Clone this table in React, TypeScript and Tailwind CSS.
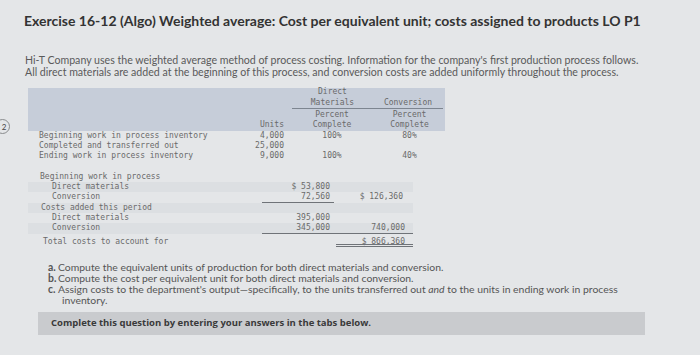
import React from "react";

const mono = { fontFamily: '"DejaVu Sans Mono", "Liberation Mono", monospace' };

export default function App() {
  return (
    <div
      className="relative w-[700px] h-[355px] overflow-hidden bg-[#e4e6e8] text-[#555]"
      style={{ fontFamily: 'Lato, "Open Sans", sans-serif' }}
    >
      <div className="absolute left-[-5px] top-[119px] w-[15px] h-[15px] rounded-full border border-[#8a8c8e] flex items-center justify-center text-[8px] text-[#444] pl-[3px]">
        2
      </div>

      <div className="pt-[13px] pl-[24px] text-[14px] leading-[16px] font-bold text-[#333]">
        Exercise 16-12 (Algo) Weighted average: Cost per equivalent unit; costs assigned to products LO P1
      </div>

      <div className="mt-[25px] pl-[25px] text-[10.6px] leading-[12px] text-[#5a5a5a]">
        <div>Hi-T Company uses the weighted average method of process costing. Information for the company's first production process follows.</div>
        <div>All direct materials are added at the beginning of this process, and conversion costs are added uniformly throughout the process.</div>
      </div>

      {/* Table 1 */}
      <div className="mt-[10px] ml-[28px] w-[417px] text-[8px] text-[#6a6a6a]" style={mono}>
        <div className="flex h-[43px] bg-[#c6cdd9]">
          <div className="w-[212px]" />
          <div className="w-[50px] flex items-end justify-end pr-[6px] pb-[1px] leading-[10px]">Units</div>
          <div className="w-[155px] flex flex-col">
            <div className="flex h-[21px] border-b border-[#7d8590] mx-[2px] leading-[10.5px]">
              <div className="w-[82px] flex flex-col items-center justify-end">
                <div>Direct</div>
                <div>Materials</div>
              </div>
              <div className="w-[71px] flex flex-col items-center justify-end">
                <div>Conversion</div>
              </div>
            </div>
            <div className="flex h-[21px] leading-[10px] pt-[1px]">
              <div className="w-[84px] flex flex-col items-center">
                <div>Percent</div>
                <div>Complete</div>
              </div>
              <div className="w-[71px] flex flex-col items-center">
                <div>Percent</div>
                <div>Complete</div>
              </div>
            </div>
          </div>
        </div>
        {[
          ["Beginning work in process inventory", "4,000", "100%", "80%"],
          ["Completed and transferred out", "25,000", "", ""],
          ["Ending work in process inventory", "9,000", "100%", "40%"],
        ].map((r, i) => (
          <div key={i} className="flex h-[10px] leading-[10px]">
            <div className="w-[212px] pl-[11px] whitespace-pre">{r[0]}</div>
            <div className="w-[50px] text-right pr-[6px]">{r[1]}</div>
            <div className="w-[84px] text-center">{r[2]}</div>
            <div className="w-[71px] text-center">{r[3]}</div>
          </div>
        ))}
      </div>

      {/* Table 2 */}
      <div className="mt-[11px] ml-[28px] w-[385px] text-[8px] text-[#6a6a6a] leading-[10px]" style={mono}>
        <div className="flex h-[10px]">
          <div className="w-[234px] pl-[12px]">Beginning work in process</div>
        </div>
        <div className="flex h-[10px] bg-[#dcdfe2]">
          <div className="w-[234px] pl-[24px]">Direct materials</div>
          <div className="w-[72px] text-right pr-[4px]">$ 53,800</div>
          <div className="w-[79px]" />
        </div>
        <div className="flex h-[11px]">
          <div className="w-[234px] pl-[24px]">Conversion</div>
          <div className="w-[72px] text-right pr-[4px] border-b border-[#6f7378]">72,560</div>
          <div className="w-[79px] text-right pr-[10px]">$ 126,360</div>
        </div>
        <div className="flex h-[10px] bg-[#dcdfe2]">
          <div className="w-[234px] pl-[13px]">Costs added this period</div>
        </div>
        <div className="flex h-[10px]">
          <div className="w-[234px] pl-[24px]">Direct materials</div>
          <div className="w-[72px] text-right pr-[4px]">395,000</div>
          <div className="w-[79px]" />
        </div>
        <div className="flex h-[11px] bg-[#dcdfe2]">
          <div className="w-[234px] pl-[24px]">Conversion</div>
          <div className="w-[72px] text-right pr-[4px] border-b border-[#6f7378]">345,000</div>
          <div className="w-[79px] text-right pr-[8px] border-b border-[#6f7378]">740,000</div>
        </div>
        <div className="flex h-[16px]">
          <div className="w-[234px] pl-[15px] pt-[3px]">Total costs to account for</div>
          <div className="w-[72px]" />
          <div className="w-[79px] pl-[2px]">
            <div className="text-right pr-[8px] pt-[3px] h-[13px] border-b-[3px] border-double border-[#6f7378]">$ 866,360</div>
          </div>
        </div>
      </div>

      {/* List */}
      <div className="mt-[12px] ml-[48px] text-[10.4px] leading-[11px] text-[#555]">
        <div className="flex">
          <span className="w-[10px] shrink-0 font-bold">a.</span>
          <span>Compute the equivalent units of production for both direct materials and conversion.</span>
        </div>
        <div className="flex">
          <span className="w-[10px] shrink-0 font-bold">b.</span>
          <span>Compute the cost per equivalent unit for both direct materials and conversion.</span>
        </div>
        <div className="flex">
          <span className="w-[10px] shrink-0 font-bold">c.</span>
          <div>
            <div className="whitespace-nowrap">
              Assign costs to the department's output—specifically, to the units transferred out <i>and</i> to the units in ending work in process
            </div>
            <div className="pl-[4px]">inventory.</div>
          </div>
        </div>
      </div>

      {/* Bar */}
      <div
        className="mt-[6px] ml-[38px] w-[607px] h-[23px] bg-[#c9cbce] flex items-center pl-[13px] text-[9.5px] font-bold text-[#3a3a3a]"
        style={{ fontFamily: '"Open Sans", Lato, sans-serif' }}
      >
        Complete this question by entering your answers in the tabs below.
      </div>
    </div>
  );
}
